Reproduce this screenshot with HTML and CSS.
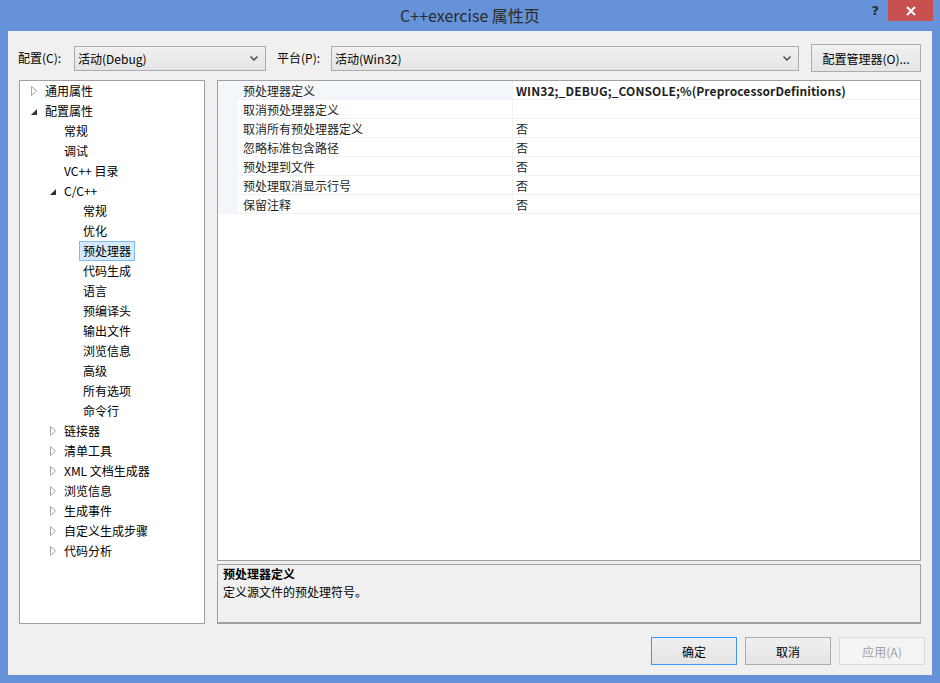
FILE: index.html
```html
<!DOCTYPE html>
<html lang="zh-CN">
<head>
<meta charset="utf-8">
<title>C++exercise 属性页</title>
<link rel="stylesheet" href="styles.css">
</head>
<body>
<div class="window">
  <div class="titlebar">
    <div></div>
    <div class="title">C++exercise 属性页</div>
    <div class="caption-btns">
      <span class="help">?</span>
      <span class="close"><svg width="10" height="10" viewBox="0 0 10 10"><path d="M1 1 L9 9 M9 1 L1 9" stroke="#fff" stroke-width="2"/></svg></span>
    </div>
  </div>
  <div class="client">
    <div class="toolbar">
      <span class="label l1">配置(C):</span>
      <div class="combo c1"><span>活动(Debug)</span><svg class="chev" width="8" height="5" viewBox="0 0 8 5"><path d="M0.5 0.5 L4 4 L7.5 0.5" fill="none" stroke="#444" stroke-width="1.4"/></svg></div>
      <span class="label l2">平台(P):</span>
      <div class="combo c2"><span>活动(Win32)</span><svg class="chev" width="8" height="5" viewBox="0 0 8 5"><path d="M0.5 0.5 L4 4 L7.5 0.5" fill="none" stroke="#444" stroke-width="1.4"/></svg></div>
      <button class="btn mgr">配置管理器(O)...</button>
    </div>
    <div class="main">
      <div class="tree">
        <div class="node lv0"><span class="exp"><svg width="6" height="10" viewBox="0 0 6 10"><path d="M0.5 0.5 L5.5 5 L0.5 9.5 Z" fill="none" stroke="#a6a6a6"/></svg></span><span class="txt">通用属性</span></div>
        <div class="node lv0"><span class="exp"><svg width="6" height="10" viewBox="0 0 6 10"><path d="M6 3 L6 9 L0 9 Z" fill="#333"/></svg></span><span class="txt">配置属性</span></div>
        <div class="node lv1"><span class="exp"></span><span class="txt">常规</span></div>
        <div class="node lv1"><span class="exp"></span><span class="txt">调试</span></div>
        <div class="node lv1"><span class="exp"></span><span class="txt">VC++ 目录</span></div>
        <div class="node lv1"><span class="exp"><svg width="6" height="10" viewBox="0 0 6 10"><path d="M6 3 L6 9 L0 9 Z" fill="#333"/></svg></span><span class="txt">C/C++</span></div>
        <div class="node lv2"><span class="exp"></span><span class="txt">常规</span></div>
        <div class="node lv2"><span class="exp"></span><span class="txt">优化</span></div>
        <div class="node lv2"><span class="exp"></span><span class="txt sel">预处理器</span></div>
        <div class="node lv2"><span class="exp"></span><span class="txt">代码生成</span></div>
        <div class="node lv2"><span class="exp"></span><span class="txt">语言</span></div>
        <div class="node lv2"><span class="exp"></span><span class="txt">预编译头</span></div>
        <div class="node lv2"><span class="exp"></span><span class="txt">输出文件</span></div>
        <div class="node lv2"><span class="exp"></span><span class="txt">浏览信息</span></div>
        <div class="node lv2"><span class="exp"></span><span class="txt">高级</span></div>
        <div class="node lv2"><span class="exp"></span><span class="txt">所有选项</span></div>
        <div class="node lv2"><span class="exp"></span><span class="txt">命令行</span></div>
        <div class="node lv1"><span class="exp"><svg width="6" height="10" viewBox="0 0 6 10"><path d="M0.5 0.5 L5.5 5 L0.5 9.5 Z" fill="none" stroke="#a6a6a6"/></svg></span><span class="txt">链接器</span></div>
        <div class="node lv1"><span class="exp"><svg width="6" height="10" viewBox="0 0 6 10"><path d="M0.5 0.5 L5.5 5 L0.5 9.5 Z" fill="none" stroke="#a6a6a6"/></svg></span><span class="txt">清单工具</span></div>
        <div class="node lv1"><span class="exp"><svg width="6" height="10" viewBox="0 0 6 10"><path d="M0.5 0.5 L5.5 5 L0.5 9.5 Z" fill="none" stroke="#a6a6a6"/></svg></span><span class="txt">XML 文档生成器</span></div>
        <div class="node lv1"><span class="exp"><svg width="6" height="10" viewBox="0 0 6 10"><path d="M0.5 0.5 L5.5 5 L0.5 9.5 Z" fill="none" stroke="#a6a6a6"/></svg></span><span class="txt">浏览信息</span></div>
        <div class="node lv1"><span class="exp"><svg width="6" height="10" viewBox="0 0 6 10"><path d="M0.5 0.5 L5.5 5 L0.5 9.5 Z" fill="none" stroke="#a6a6a6"/></svg></span><span class="txt">生成事件</span></div>
        <div class="node lv1"><span class="exp"><svg width="6" height="10" viewBox="0 0 6 10"><path d="M0.5 0.5 L5.5 5 L0.5 9.5 Z" fill="none" stroke="#a6a6a6"/></svg></span><span class="txt">自定义生成步骤</span></div>
        <div class="node lv1"><span class="exp"><svg width="6" height="10" viewBox="0 0 6 10"><path d="M0.5 0.5 L5.5 5 L0.5 9.5 Z" fill="none" stroke="#a6a6a6"/></svg></span><span class="txt">代码分析</span></div>
      </div>
      <div class="right">
        <div class="grid">
          <div class="prow active"><span class="gut"></span><span class="pname">预处理器定义</span><span class="pval bold">WIN32;_DEBUG;_CONSOLE;%(PreprocessorDefinitions)</span></div>
          <div class="prow"><span class="gut"></span><span class="pname">取消预处理器定义</span><span class="pval"></span></div>
          <div class="prow"><span class="gut"></span><span class="pname">取消所有预处理器定义</span><span class="pval">否</span></div>
          <div class="prow"><span class="gut"></span><span class="pname">忽略标准包含路径</span><span class="pval">否</span></div>
          <div class="prow"><span class="gut"></span><span class="pname">预处理到文件</span><span class="pval">否</span></div>
          <div class="prow"><span class="gut"></span><span class="pname">预处理取消显示行号</span><span class="pval">否</span></div>
          <div class="prow"><span class="gut"></span><span class="pname">保留注释</span><span class="pval">否</span></div>
        </div>
        <div class="desc">
          <div class="desc-title">预处理器定义</div>
          <div class="desc-text">定义源文件的预处理符号。</div>
        </div>
      </div>
    </div>
    <div class="footer">
      <button class="btn dlg default">确定</button>
      <button class="btn dlg">取消</button>
      <button class="btn dlg disabled">应用(A)</button>
    </div>
  </div>
</div>
</body>
</html>
```

FILE: styles.css
```css
html, body {
  margin: 0;
  padding: 0;
}
body {
  width: 940px;
  height: 683px;
  overflow: hidden;
  background: #6592d8;
  font-family: "Noto Sans CJK SC", "Noto Sans", sans-serif;
  font-size: 12px;
  color: #000;
}
.window {
  width: 940px;
  height: 683px;
  display: flex;
  flex-direction: column;
  background: #6592d8;
}
.titlebar {
  height: 31px;
  display: grid;
  grid-template-columns: 1fr auto 1fr;
  align-items: start;
}
.title {
  font-size: 16px;
  line-height: 31px;
  color: #2b2b2b;
}
.caption-btns {
  display: flex;
  justify-content: flex-end;
  align-items: flex-start;
  padding-right: 7px;
}
.help {
  font-family: "DejaVu Sans", sans-serif;
  font-weight: bold;
  font-size: 13px;
  line-height: 22px;
  color: #2b2b2b;
  margin-right: 9px;
}
.close {
  width: 45px;
  height: 21px;
  background: #c75050;
  display: flex;
  align-items: center;
  justify-content: center;
}
.client {
  margin: 0 8px 8px 8px;
  flex: 1;
  background: #f0f0f0;
  display: flex;
  flex-direction: column;
}
.toolbar {
  height: 49px;
  box-sizing: border-box;
  padding: 13px 0 0 10px;
  display: flex;
  align-items: flex-start;
}
.label {
  line-height: 28px;
  white-space: nowrap;
}
.l1 { width: 56px; }
.l2 { width: 54px; margin-left: 11px; }
.combo {
  box-sizing: border-box;
  height: 25px;
  margin-top: 2px;
  border: 1px solid #acacac;
  background: linear-gradient(#f0f0f0, #e5e5e5);
  display: flex;
  align-items: center;
  justify-content: space-between;
  padding: 0 7px 0 3px;
}
.combo span { line-height: 22px; }
.c1 { width: 192px; }
.c2 { width: 468px; }
.chev { display: block; }
.btn {
  font-family: inherit;
  font-size: 12px;
  color: #000;
  box-sizing: border-box;
  border: 1px solid #acacac;
  background: linear-gradient(#f0f0f0, #e5e5e5);
  padding: 0;
  margin: 0;
}
.mgr {
  width: 110px;
  height: 28px;
  margin-left: 12px;
}
.main {
  display: flex;
  padding-left: 11px;
  height: 544px;
}
.tree {
  box-sizing: border-box;
  width: 186px;
  height: 544px;
  border: 1px solid #a0a0a0;
  background: #fff;
}
.node {
  height: 20px;
  line-height: 20px;
  display: flex;
  align-items: center;
  white-space: nowrap;
}
.lv0 { padding-left: 11px; }
.lv1 { padding-left: 30px; }
.lv2 { padding-left: 49px; }
.exp {
  width: 14px;
  flex: none;
  display: flex;
  align-items: center;
}
.exp svg { display: block; }
.txt { line-height: 20px; }
.txt.sel {
  margin-left: -4px;
  padding: 0 3px;
  line-height: 18px;
  border: 1px solid #7ebbe6;
  background: #d4eafa;
}
.right {
  margin-left: 12px;
  width: 704px;
  display: flex;
  flex-direction: column;
}
.grid {
  box-sizing: border-box;
  height: 482px;
  border: 1px solid #a0a0a0;
  background: #fff;
}
.prow {
  display: grid;
  grid-template-columns: 20px 275px 1fr;
  height: 19px;
  color: #1e1e1e;
}
.gut { background: #f3f6fa; }
.pname, .pval {
  padding-top: 1px;
  line-height: 17px;
  border-bottom: 1px solid #eef2f6;
  white-space: nowrap;
}
.pname {
  padding-left: 5px;
  border-right: 1px solid #f0f2f5;
}
.pval { padding-left: 3px; }
.active .pname { background: #f3f6fa; }
.bold { font-weight: bold; letter-spacing: 0.1px; }
.desc {
  box-sizing: border-box;
  margin-top: 3px;
  height: 60px;
  border: 1px solid #a0a0a0;
  border-bottom-width: 2px;
  padding-left: 5px;
  line-height: 18px;
}
.desc-title { font-weight: bold; }
.footer {
  display: flex;
  justify-content: flex-end;
  gap: 8px;
  padding: 13px 7px 0 0;
}
.dlg {
  width: 86px;
  height: 28px;
}
.dlg.default { border-color: #3399ff; }
.dlg.disabled {
  border-color: #d9d9d9;
  background: #f4f4f4;
  color: #a0a0a0;
}
```
